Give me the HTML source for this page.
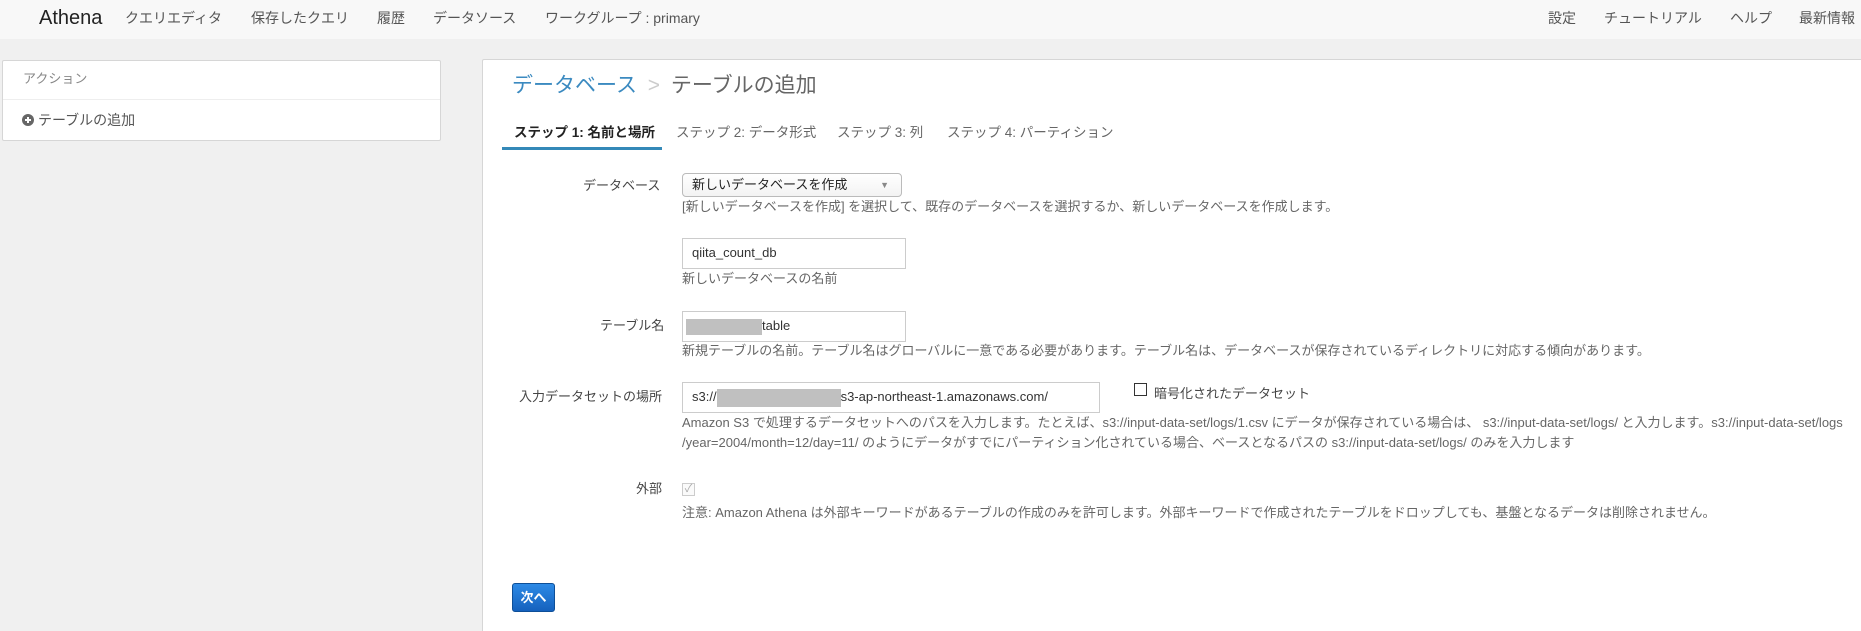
<!DOCTYPE html>
<html><head><meta charset="utf-8">
<style>
*{box-sizing:border-box;margin:0;padding:0}
html,body{width:1861px;height:631px;overflow:hidden;background:#f0f0f0;font-family:"Liberation Sans","Noto Sans CJK JP",sans-serif;color:#555;position:relative}
.a{position:absolute;white-space:nowrap}
.nav{position:absolute;left:0;top:0;width:1861px;height:39px;background:#f8f8f8}
.nav .a{font-size:14px;color:#555;top:9px;line-height:18px}
.lp{position:absolute;left:2px;top:60px;width:439px;height:81px;background:#fff;border:1px solid #d6d6d6;border-radius:2px}
.mp{position:absolute;left:482px;top:59px;width:1379px;height:572px;background:#fff;border:1px solid #d6d6d6;border-bottom:none;border-right:none;border-radius:2px 0 0 0}
.lbl{font-size:13px;color:#444;line-height:16px;text-align:right}
.help{font-size:13px;color:#666;line-height:16px;left:682px}
.inp{position:absolute;background:#fff;border:1px solid #ccc;font-size:13px;color:#333;padding-left:9px;line-height:28px}
.tab{font-size:13.5px;color:#666;top:124px;line-height:18px}
</style></head><body>
<div class="nav">
<div class="a" style="left:39px;top:6px;font-size:20px;color:#222;line-height:24px">Athena</div>
<div class="a" style="left:125px">クエリエディタ</div>
<div class="a" style="left:251px">保存したクエリ</div>
<div class="a" style="left:377px">履歴</div>
<div class="a" style="left:433px">データソース</div>
<div class="a" style="left:545px">ワークグループ : primary</div>
<div class="a" style="left:1548px">設定</div>
<div class="a" style="left:1604px">チュートリアル</div>
<div class="a" style="left:1730px">ヘルプ</div>
<div class="a" style="left:1799px">最新情報</div>
</div>
<div class="lp">
<div class="a" style="left:20px;top:10px;font-size:13px;color:#888;line-height:16px">アクション</div>
<div style="position:absolute;left:0;top:38px;width:100%;border-top:1px solid #eee"></div>
<div class="a" style="left:19px;top:53px;width:12px;height:12px;border-radius:50%;background:#666"></div>
<div class="a" style="left:22px;top:58px;width:6px;height:2px;background:#fff"></div>
<div class="a" style="left:24px;top:56px;width:2px;height:6px;background:#fff"></div>
<div class="a" style="left:35px;top:51px;font-size:14px;color:#555;line-height:17px">テーブルの追加</div>
</div>
<div class="mp"></div>
<div class="a" style="left:512px;top:72px;font-size:21px;line-height:27px;color:#666"><span style="color:#3b8ac0">データベース</span> <span style="color:#ccc;margin:0 5px">&gt;</span> テーブルの追加</div>
<div class="a tab" style="left:514px;color:#222;font-weight:bold">ステップ 1: 名前と場所</div>
<div class="a tab" style="left:676px">ステップ 2: データ形式</div>
<div class="a tab" style="left:837px">ステップ 3: 列</div>
<div class="a tab" style="left:947px">ステップ 4: パーティション</div>
<div class="a" style="left:502px;top:147px;width:160px;height:3px;background:#3489b8"></div>

<div class="a lbl" style="top:178px;left:583px">データベース</div>
<div class="inp" style="left:682px;top:173px;width:220px;height:24px;line-height:22px;border-radius:4px;border-color:#bbb;background:linear-gradient(#fff,#f3f3f3);color:#222">新しいデータベースを作成<span style="position:absolute;right:12px;top:0;font-size:9px;color:#888">▼</span></div>
<div class="a help" style="top:199px">[新しいデータベースを作成] を選択して、既存のデータベースを選択するか、新しいデータベースを作成します。</div>

<div class="inp" style="left:682px;top:238px;width:224px;height:31px">qiita_count_db</div>
<div class="a help" style="top:271px">新しいデータベースの名前</div>

<div class="a lbl" style="top:318px;left:600px">テーブル名</div>
<div class="inp" style="left:682px;top:311px;width:224px;height:31px"><span style="display:inline-block;width:76px;height:16px;background:#c0c0c0;vertical-align:middle;margin-left:-6px"></span>table</div>
<div class="a help" style="top:343px">新規テーブルの名前。テーブル名はグローバルに一意である必要があります。テーブル名は、データベースが保存されているディレクトリに対応する傾向があります。</div>

<div class="a lbl" style="top:389px;left:519px">入力データセットの場所</div>
<div class="inp" style="left:682px;top:382px;width:418px;height:31px">s3://<span style="display:inline-block;width:124px;height:18px;background:#c0c0c0;vertical-align:middle"></span>s3-ap-northeast-1.amazonaws.com/</div>
<div class="a" style="left:1134px;top:383px;width:13px;height:13px;border:1.5px solid #333;background:#fff"></div>
<div class="a" style="left:1154px;top:386px;font-size:13px;color:#444;line-height:16px">暗号化されたデータセット</div>
<div class="a help" style="top:415px">Amazon S3 で処理するデータセットへのパスを入力します。たとえば、s3://input-data-set/logs/1.csv にデータが保存されている場合は、 s3://input-data-set/logs/ と入力します。s3://input-data-set/logs</div>
<div class="a help" style="top:435px">/year=2004/month=12/day=11/ のようにデータがすでにパーティション化されている場合、ベースとなるパスの s3://input-data-set/logs/ のみを入力します</div>

<div class="a lbl" style="top:481px;left:636px">外部</div>
<div class="a" style="left:682px;top:483px;width:13px;height:13px;border:1px solid #ccc;background:#fafafa;color:#aaa;font-size:11px;line-height:11px;text-align:center">✓</div>
<div class="a help" style="top:505px">注意: Amazon Athena は外部キーワードがあるテーブルの作成のみを許可します。外部キーワードで作成されたテーブルをドロップしても、基盤となるデータは削除されません。</div>

<div class="a" style="left:512px;top:583px;width:43px;height:29px;border:1px solid #0e4f98;border-radius:3px;background:linear-gradient(#2d8ae6,#1561bd);color:#fff;font-size:13px;font-weight:bold;text-align:center;line-height:27px">次へ</div>
</body></html>
